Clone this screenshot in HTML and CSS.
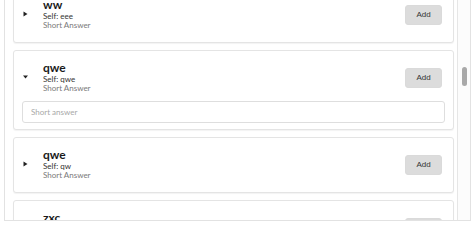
FILE: index.html
```html
<!DOCTYPE html>
<html>
<head>
<meta charset="utf-8">
<link rel="stylesheet" href="styles.css">
</head>
<body>
<div class="page">
  <div class="frame">
    <div class="viewport">
      <div class="list">
        <div class="card">
          <div class="header">
            <svg class="arrow" width="5" height="6" viewBox="0 0 5 6"><path d="M0.5 0.5 L4.5 3 L0.5 5.5 Z" fill="#222"/></svg>
            <div class="text">
              <div class="title">ww</div>
              <div class="self">Self: eee</div>
              <div class="type">Short Answer</div>
            </div>
            <button class="add">Add</button>
          </div>
        </div>
        <div class="card open">
          <div class="header">
            <svg class="arrow" width="5" height="6" viewBox="0 0 5 6"><path d="M0 1.5 L5 1.5 L2.5 4.5 Z" fill="#222"/></svg>
            <div class="text">
              <div class="title">qwe</div>
              <div class="self">Self: qwe</div>
              <div class="type">Short Answer</div>
            </div>
            <button class="add">Add</button>
          </div>
          <div class="body">
            <input class="answer" type="text" placeholder="Short answer">
          </div>
        </div>
        <div class="card">
          <div class="header">
            <svg class="arrow" width="5" height="6" viewBox="0 0 5 6"><path d="M0.5 0.5 L4.5 3 L0.5 5.5 Z" fill="#222"/></svg>
            <div class="text">
              <div class="title">qwe</div>
              <div class="self">Self: qw</div>
              <div class="type">Short Answer</div>
            </div>
            <button class="add">Add</button>
          </div>
        </div>
        <div class="card">
          <div class="header">
            <svg class="arrow" width="5" height="6" viewBox="0 0 5 6"><path d="M0.5 0.5 L4.5 3 L0.5 5.5 Z" fill="#222"/></svg>
            <div class="text">
              <div class="title">zxc</div>
              <div class="self">Self: zx</div>
              <div class="type">Short Answer</div>
            </div>
            <button class="add">Add</button>
          </div>
        </div>
      </div>
    </div>
    <div class="scrollbar"><div class="thumb"></div></div>
  </div>
</div>
</body>
</html>
```

FILE: styles.css
```css
html, body {
  margin: 0;
  padding: 0;
  background: #ffffff;
  font-family: Lato, "Open Sans", sans-serif;
}

.page {
  width: 474px;
  height: 227px;
  padding: 0 3px 0 4px;
  box-sizing: border-box;
}

.frame {
  height: 221px;
  box-sizing: border-box;
  border: 1px solid #e2e2e2;
  border-top: none;
  display: flex;
  overflow: hidden;
}

.viewport {
  flex: 1;
  overflow: hidden;
  padding: 0 3px 0 8px;
}

.list {
  margin-top: -13px;
  display: flex;
  flex-direction: column;
  gap: 7px;
}

.card {
  border: 1px solid #e4e4e4;
  border-radius: 3px;
  box-shadow: 0 1px 1px rgba(0, 0, 0, 0.05);
  background: #fff;
  padding-bottom: 10px;
}

.card.open {
  padding-bottom: 0;
}

.header {
  height: 44px;
  box-sizing: border-box;
  padding: 10px 11px 2px 9px;
  display: flex;
  align-items: center;
}

.arrow {
  flex: none;
  margin-right: 15px;
}

.text {
  flex: 1;
  display: flex;
  flex-direction: column;
}

.title {
  font-size: 12px;
  line-height: 14px;
  font-weight: 700;
  color: #1a1a1a;
}

.self {
  font-size: 8px;
  line-height: 9px;
  color: #333;
}

.type {
  font-size: 8px;
  line-height: 9px;
  color: #7a7a7a;
}

.add {
  flex: none;
  width: 37px;
  height: 20px;
  margin-top: 1px;
  padding: 0;
  border: 1px solid #dadada;
  border-radius: 3px;
  background: #dcdcdc;
  color: #333;
  font-family: "Liberation Sans", Arial, sans-serif;
  font-size: 8px;
}

.body {
  padding: 6px 8px 6px 8px;
}

.answer {
  display: block;
  width: 100%;
  height: 22px;
  box-sizing: border-box;
  border: 1px solid #dedede;
  border-radius: 3px;
  padding: 0 8px;
  font-family: Lato, sans-serif;
  font-size: 8px;
  color: #333;
  outline: none;
}

.answer::placeholder {
  color: #a8a8a8;
}

.scrollbar {
  flex: none;
  width: 12px;
  border-left: 1px solid #e6e6e6;
  background: #fcfcfc;
}

.thumb {
  width: 5px;
  height: 19px;
  margin: 67px 0 0 4px;
  border-radius: 3px;
  background: #a9a9a9;
}
```
